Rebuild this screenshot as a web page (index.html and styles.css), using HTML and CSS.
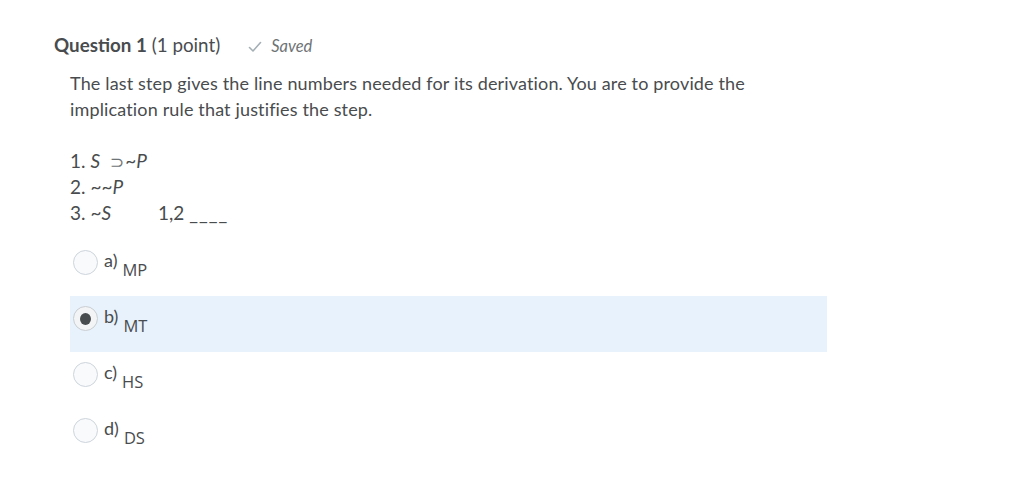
FILE: index.html
```html
<!DOCTYPE html>
<html>
<head>
<meta charset="utf-8">
<link rel="stylesheet" href="styles.css">
</head>
<body>
<div class="question">
  <div class="q-header">
    <h2 class="q-title"><strong>Question 1</strong> (1 point)</h2>
    <span class="saved">
      <svg class="check" width="14" height="12" viewBox="0 0 14 12"><path d="M1.5 6.5 L5 10 L12.5 1.5" fill="none" stroke="#a3aeb5" stroke-width="1.6" stroke-linecap="round" stroke-linejoin="round"/></svg>
      <em>Saved</em>
    </span>
  </div>
  <p class="prompt">The last step gives the line numbers needed for its derivation. You are to provide the implication rule that justifies the step.</p>
  <div class="proof">
    <div class="line">1. <i>S</i><span class="horse">⊃</span><i>~P</i></div>
    <div class="line">2. <i>~~P</i></div>
    <div class="line"><span class="n3">3. <i>~S</i></span>1,2 <span class="blank">____</span></div>
  </div>
  <div class="options">
    <label class="opt"><span class="radio"></span><span class="letter">a)</span><span class="ans">MP</span></label>
    <label class="opt selected"><span class="radio on"></span><span class="letter">b)</span><span class="ans">MT</span></label>
    <label class="opt"><span class="radio"></span><span class="letter">c)</span><span class="ans">HS</span></label>
    <label class="opt"><span class="radio"></span><span class="letter">d)</span><span class="ans">DS</span></label>
  </div>
</div>
</body>
</html>
```

FILE: styles.css
```css
html, body {
  margin: 0;
  padding: 0;
  background: #ffffff;
}
body {
  font-family: Lato, "Open Sans", sans-serif;
  color: #494c4e;
}
.question {
  padding: 33px 0 0 54px;
  width: 773px;
}
.q-header {
  display: flex;
  align-items: baseline;
  gap: 28px;
  height: 24px;
}
.q-title {
  margin: 0;
  font-size: 18.8px;
  font-weight: 400;
  line-height: 24px;
}
.q-title strong {
  font-weight: 700;
}
.saved {
  display: flex;
  align-items: baseline;
  gap: 9px;
  color: #6e7376;
  font-size: 16.5px;
}
.saved em {
  font-style: italic;
}
.check {
  position: relative;
  top: 1px;
}
.prompt {
  margin: 13px 0 0 16px;
  width: 720px;
  font-size: 18px;
  letter-spacing: 0.15px;
  line-height: 26px;
}
.proof {
  margin: 26px 0 0 16px;
  font-size: 19px;
  line-height: 26px;
}
.line {
  height: 26px;
  white-space: nowrap;
}
.proof i {
  font-style: italic;
}
.horse {
  font-family: "DejaVu Sans", sans-serif;
  font-size: 17px;
  line-height: 1;
  color: #6e7376;
  margin: 0 1px 0 10px;
}
.n3 {
  display: inline-block;
  width: 88px;
}
.blank {
  letter-spacing: 1px;
}
.options {
  margin: 14px 0 0 16px;
  display: flex;
  flex-direction: column;
}
.opt {
  display: flex;
  align-items: flex-start;
  height: 56px;
  box-sizing: border-box;
  padding: 10px 0 0 3px;
}
.opt.selected {
  background: #e8f2fc;
}
.radio {
  width: 23px;
  height: 23px;
  border: 1px solid #cdd5dc;
  border-radius: 50%;
  background: #f9fafb;
  position: relative;
  flex: none;
}
.radio.on {
  border-color: #c9ced2;
  background: #f3f4f5;
}
.radio.on::after {
  content: "";
  position: absolute;
  left: 6px;
  top: 6px;
  width: 11px;
  height: 12px;
  border-radius: 50%;
  background: #494c4e;
}
.letter {
  margin-left: 6px;
  font-size: 18px;
  line-height: 20px;
  padding-top: 0;
}
.ans {
  margin-left: 5px;
  font-family: "Open Sans", sans-serif;
  font-size: 16.5px;
  line-height: 20px;
  padding-top: 10px;
}
```
